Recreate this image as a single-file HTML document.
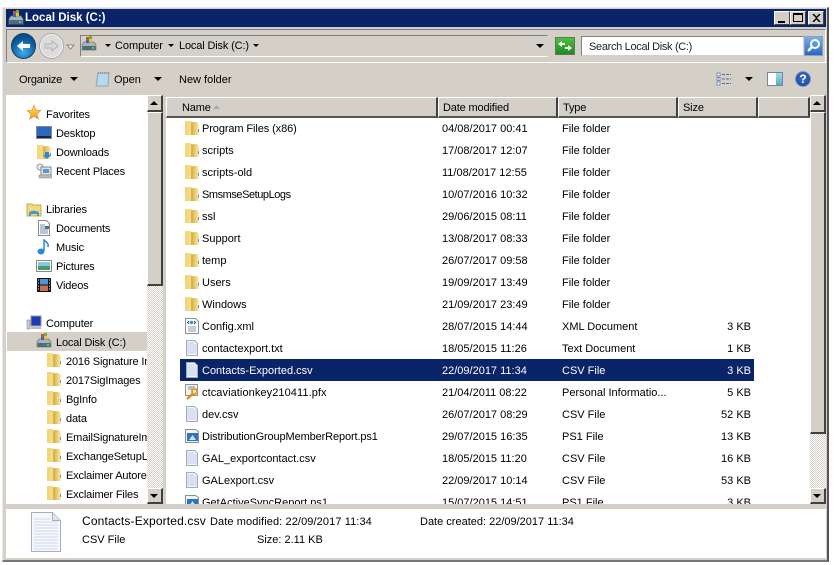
<!DOCTYPE html>
<html><head><meta charset="utf-8">
<style>
html,body{margin:0;padding:0;width:836px;height:565px;overflow:hidden;background:#fff}
*{box-sizing:border-box}
body{font:11px/14px "Liberation Sans",sans-serif;color:#000;position:relative}
.a{position:absolute}
.t{position:absolute;white-space:nowrap;line-height:14px;height:14px;margin-top:1px}
.i{position:absolute;width:16px;height:16px}
.tri{position:absolute;width:0;height:0;border-left:4px solid transparent;border-right:4px solid transparent;border-top:4px solid #000}
.sb{position:absolute;background:#d4d0c8;border-top:1px solid #fff;border-left:1px solid #fff;border-right:2px solid #404040;border-bottom:2px solid #404040}
.hd{position:absolute;top:97px;height:21px;background:#d4d0c8;border-top:1px solid #fff;border-left:1px solid #fff;border-right:2px solid #404040;border-bottom:2px solid #555;padding:3px 0 0 4px;letter-spacing:-.15px}
.track{position:absolute;background-color:#eeecea;background-image:repeating-conic-gradient(#d4d0c8 0 25%,#fff 0 50%);background-size:2px 2px}
.tree .t{letter-spacing:-.15px}
</style></head><body>
<svg width="0" height="0" style="position:absolute">
<defs>
<linearGradient id="fg" x1="0" y1="0" x2="1" y2="0"><stop offset="0" stop-color="#e9c765"/><stop offset=".45" stop-color="#f8e497"/><stop offset=".6" stop-color="#e0bd5c"/><stop offset="1" stop-color="#fbeeae"/></linearGradient>
<symbol id="fo" viewBox="0 0 16 16"><path d="M1 1h5l2 1h5l2 2v11H1z" fill="url(#fg)"/><path d="M7 2l2 1v12H7z" fill="#d8b450"/><path d="M1 1h6v14H1z" fill="#f4da82" opacity=".7"/><path d="M14 9h1v3h-1z" fill="#4a9ad8"/></symbol>
<symbol id="doc" viewBox="0 0 16 16"><path d="M2.500 .5h8l3 3v12h-11z" fill="#f4f7fc" stroke="#a4acbc"/><path d="M3 3h7M3 5h10M3 7h10M3 9h10M3 11h10M3 13h10" stroke="#bccae6"/></symbol>
<symbol id="xml" viewBox="0 0 16 16"><path d="M1.500 .5h10l3 3v12h-13z" fill="#fff" stroke="#8a8f99"/><path d="M5 3L3.500 4.500 5 6M10 3l1.500 1.500L10 6" stroke="#444" fill="none"/><circle cx="7.500" cy="4.500" r="1.700" fill="#2f9ac8"/><path d="M4 9h8M4 11h8M4 13h8" stroke="#999"/></symbol>
<symbol id="ps" viewBox="0 0 16 16"><path d="M1.500 1.500h10l3 2v11h-13z" fill="#f4f4f4" stroke="#8a8f99"/><rect x="3" y="5" width="11" height="8" fill="#2f74c0"/><path d="M5 12l3.500-5 3.500 5z" fill="#cfe4fa"/></symbol>
<symbol id="pfx" viewBox="0 0 16 16"><path d="M1.500 .5h12v11h-12z" fill="#f8f4ee" stroke="#9a8f80"/><path d="M4 3h7M4 5h6" stroke="#6a8ac0"/><circle cx="10.500" cy="7.500" r="2.500" fill="none" stroke="#e09a20" stroke-width="2"/><path d="M8.500 10L3 15" stroke="#d88a18" stroke-width="2.200"/></symbol>
<symbol id="drv" viewBox="0 0 16 16"><path d="M1 9l2-3h10l2 3v5H1z" fill="#aab4b8" stroke="#707a80" stroke-width=".7"/><rect x="1.500" y="10" width="13" height="4" fill="#4d6d78"/><rect x="11" y="11" width="2" height="2" fill="#60d040"/><rect x="5" y="1" width="3" height="3" fill="#e84820"/><rect x="8" y="0" width="3" height="3" fill="#70b030"/><rect x="5" y="4" width="3" height="3" fill="#2070d0"/><rect x="8" y="3" width="3" height="3" fill="#f0c020"/></symbol>
</defs></svg>

<!-- window frame -->
<div class="a" style="left:2px;top:7px;width:827px;height:555px;background:#d4d0c8;border-right:2px solid #555;border-bottom:2px solid #777;border-left:1px solid #e8e8e8;border-top:1px solid #e8e8e8"></div>

<!-- title bar -->
<div class="a" style="left:6px;top:9px;width:820px;height:18px;background:#0a246a"></div>
<svg class="i" style="left:8px;top:10px"><use href="#drv"/></svg>
<div class="t" style="left:25px;top:11px;margin-top:0;color:#fff;font-weight:bold;font-size:11.500px">Local Disk (C:)</div>
<div class="a" style="left:774px;top:11px;width:16px;height:14px;background:#d4d0c8;border:1px solid;border-color:#fff #404040 #404040 #fff"><div class="a" style="left:3px;bottom:1px;width:7px;height:2px;background:#000"></div></div>
<div class="a" style="left:790px;top:11px;width:16px;height:14px;background:#d4d0c8;border:1px solid;border-color:#fff #404040 #404040 #fff"><div class="a" style="left:2px;top:1px;width:10px;height:9px;border:1px solid #000;border-top-width:2px"></div></div>
<div class="a" style="left:808px;top:11px;width:16px;height:14px;background:#d4d0c8;border:1px solid;border-color:#fff #404040 #404040 #fff"><svg class="a" style="left:3px;top:2px" width="9" height="8"><path d="M1 0l3.500 3.500L8 0M1 8l3.500-3.500L8 8" stroke="#000" stroke-width="1.500" fill="none"/></svg></div>

<!-- address band -->
<div class="a" style="left:6px;top:29px;width:820px;height:34px;border:1px solid;border-color:#808080 #fff #fff #808080;outline:1px solid #d4d0c8"></div>
<div class="a" style="left:11px;top:33px;width:25px;height:26px;border-radius:50%;background:radial-gradient(circle at 50% 75%,#3ab0e8,#0c5a9c 60%,#083c70);border:1px solid #1a3d60"></div>
<svg class="a" style="left:15px;top:38px" width="18" height="16"><path d="M2 8l6-5v3h7v4H8v3z" fill="#fff"/></svg>
<div class="a" style="left:39px;top:33px;width:25px;height:26px;border-radius:50%;background:#dcdcdc;border:1px solid #aaa;box-shadow:inset 0 0 0 1px #f4f4f4"></div>
<svg class="a" style="left:43px;top:38px" width="18" height="16"><path d="M15 8l-6-5v3H2v4h7v3z" fill="#d8d8d8" stroke="#b4b4b4"/></svg>
<svg class="a" style="left:66px;top:44px" width="10" height="7"><path d="M1 1h7L4.500 5z" fill="#fff" stroke="#888"/></svg>
<div class="a" style="left:80px;top:35px;width:468px;height:22px;background:#d4d0c8;border:1px solid;border-color:#808080 #d4d0c8 #fff #808080"></div>
<svg class="a" style="left:81px;top:36px;width:16px;height:16px"><use href="#drv"/></svg>
<div class="tri" style="left:105px;top:44px;border-left-width:3px;border-right-width:3px;border-top-width:3px"></div>
<div class="t" style="left:115px;top:38px;letter-spacing:-.05px">Computer</div>
<div class="tri" style="left:168px;top:44px;border-left-width:3px;border-right-width:3px;border-top-width:3px"></div>
<div class="t" style="left:179px;top:38px;letter-spacing:-.15px">Local Disk (C:)</div>
<div class="tri" style="left:253px;top:44px;border-left-width:3px;border-right-width:3px;border-top-width:3px"></div>
<div class="tri" style="left:536px;top:44px"></div>
<div class="a" style="left:555px;top:37px;width:20px;height:18px;background:linear-gradient(#50c040,#1c8a20);border:1px solid #5a7a50"></div>
<svg class="a" style="left:556px;top:38px" width="18" height="16"><path d="M2 6l4-3v2h3v2H6v2zM16 10l-4 3v-2H9V9h3V7z" fill="#fff"/></svg>
<div class="a" style="left:581px;top:36px;width:223px;height:20px;background:#fff;border:1px solid;border-color:#808080 #d4d0c8 #d4d0c8 #808080"></div>
<div class="t" style="left:589px;top:39px;color:#222;letter-spacing:-.32px">Search Local Disk (C:)</div>
<div class="a" style="left:804px;top:36px;width:19px;height:20px;background:linear-gradient(#7ab0e8,#2a68c0);border:1px solid #8aa0c0"></div>
<svg class="a" style="left:805px;top:37px" width="17" height="17"><circle cx="10" cy="7" r="4" fill="none" stroke="#fff" stroke-width="2"/><path d="M7 10l-4 4" stroke="#fff" stroke-width="2.500"/></svg>

<!-- toolbar -->
<div class="t" style="left:19px;top:72px;letter-spacing:-.2px">Organize</div>
<div class="tri" style="left:70px;top:77px"></div>
<svg class="a" style="left:95px;top:71px" width="16" height="16"><path d="M3 2h11l-1 13H1z" fill="#b8d8f0" stroke="#8aa"/><path d="M3 2h11" stroke="#666" stroke-dasharray="1 1"/></svg>
<div class="t" style="left:114px;top:72px">Open</div>
<div class="tri" style="left:154px;top:77px"></div>
<div class="t" style="left:179px;top:72px">New folder</div>
<svg class="a" style="left:716px;top:72px" width="16" height="14"><path d="M1 1h3v3H1zM1 5.500h3v3H1zM1 10h3v3H1z" fill="#fff" stroke="#5a78a8" stroke-width=".8"/><path d="M6 2.500h9M6 7h9M6 11.500h9" stroke="#5a6a90" stroke-dasharray="3 1"/><rect x="2" y="6.500" width="1" height="1" fill="#e02020"/></svg>
<div class="tri" style="left:745px;top:77px"></div>
<div class="a" style="left:767px;top:72px;width:16px;height:14px;background:#fff;border:1px solid #6a8aa8"></div>
<div class="a" style="left:776px;top:73px;width:6px;height:12px;background:linear-gradient(#a8d8e8,#5ea8c8)"></div>
<div class="a" style="left:795px;top:71px;width:16px;height:16px;border-radius:50%;background:radial-gradient(circle at 50% 40%,#3a70d0,#1a3f98);border:1px solid #8a98b8;color:#fff;font:bold 12px/14px 'Liberation Sans',sans-serif;text-align:center">?</div>

<!-- left pane -->
<div class="a tree" style="left:6px;top:95px;width:141px;height:409px;background:#fff;overflow:hidden">
 <svg class="a" style="left:20px;top:9px;width:16px;height:16px"><defs><linearGradient id="st" x1="0" y1="0" x2="0" y2="1"><stop offset="0" stop-color="#fbe070"/><stop offset="1" stop-color="#f49a20"/></linearGradient></defs><path d="M8 1l2 5 5 .5-4 3.500 1.500 5L8 12.500 3.500 15 5 10 1 6.500 6 6z" fill="url(#st)" stroke="#e09020" stroke-width=".6"/></svg>
 <div class="t" style="left:40px;top:12px">Favorites</div>
 <svg class="a" style="left:30px;top:30px;width:16px;height:16px"><rect x=".5" y="1.500" width="15" height="12" fill="#2a68c0" stroke="#7a8aa0"/><rect x="1" y="11" width="14" height="2" fill="#223"/></svg>
 <div class="t" style="left:50px;top:31px">Desktop</div>
 <svg class="i" style="left:30px;top:49px"><use href="#fo"/><path d="M9 8h4v3h2l-4 4-4-4h2z" fill="#2a88d8"/></svg>
 <div class="t" style="left:50px;top:50px">Downloads</div>
 <svg class="a" style="left:30px;top:68px;width:16px;height:16px"><circle cx="4" cy="4" r="3" fill="#eee" stroke="#999"/><rect x="5" y="4" width="10" height="8" fill="#d8e4f0" stroke="#888"/><rect x="7" y="6" width="6" height="4" fill="#5a98d0"/><rect x="3" y="12" width="13" height="3" fill="#bbb" stroke="#888" stroke-width=".5"/></svg>
 <div class="t" style="left:50px;top:69px">Recent Places</div>
 <svg class="a" style="left:20px;top:106px;width:16px;height:16px"><path d="M1 3h5l1 1h8v11H1z" fill="#f2d880" stroke="#c8a848"/><path d="M3 15v-3c0-3 10-3 10 0v3h-2v-2H5v2z" fill="#4a98d0"/></svg>
 <div class="t" style="left:40px;top:107px">Libraries</div>
 <svg class="a" style="left:30px;top:125px;width:16px;height:16px"><path d="M2.500 .5h8l3 3v12h-11z" fill="#fff" stroke="#888"/><path d="M4 5h5M4 7h5M4 9h8M4 11h8M4 13h8" stroke="#7a88a8"/><rect x="9" y="6" width="4" height="3" fill="#3a70b0"/></svg>
 <div class="t" style="left:50px;top:126px">Documents</div>
 <svg class="a" style="left:30px;top:144px;width:16px;height:16px"><ellipse cx="5" cy="12.500" rx="3.500" ry="3" fill="#2a88d8"/><path d="M8 12V1c2 2 5 3 4 7" fill="none" stroke="#2a88d8" stroke-width="1.500"/></svg>
 <div class="t" style="left:50px;top:145px">Music</div>
 <svg class="a" style="left:30px;top:163px;width:16px;height:16px"><rect x=".5" y="2.500" width="15" height="11" fill="#fff" stroke="#888"/><rect x="2" y="4" width="12" height="4" fill="#8ac8e0"/><rect x="2" y="8" width="12" height="4" fill="#4a9a6a"/></svg>
 <div class="t" style="left:50px;top:164px">Pictures</div>
 <svg class="a" style="left:30px;top:182px;width:16px;height:16px"><rect x="1" y="1" width="14" height="14" fill="#111"/><rect x="4" y="2" width="8" height="5.500" fill="#4a98d8"/><rect x="4" y="8.500" width="8" height="5.500" fill="#c87050"/><path d="M2 3h1M2 6h1M2 9h1M2 12h1M13 3h1M13 6h1M13 9h1M13 12h1" stroke="#fff"/></svg>
 <div class="t" style="left:50px;top:183px">Videos</div>
 <svg class="a" style="left:20px;top:220px;width:16px;height:16px"><rect x="5" y="1" width="10" height="10" fill="#1a3ab8" stroke="#999"/><rect x="1" y="5" width="3" height="9" fill="#ccc" stroke="#777" stroke-width=".5"/><rect x="5" y="12" width="10" height="2" fill="#bbb"/></svg>
 <div class="t" style="left:40px;top:221px">Computer</div>
 <div class="a" style="left:1px;top:237px;width:140px;height:19px;background:#d4d0c8"></div>
 <svg class="i" style="left:30px;top:238px"><use href="#drv"/></svg>
 <div class="t" style="left:50px;top:240px">Local Disk (C:)</div>
 <svg class="i" style="left:40px;top:257px"><use href="#fo"/></svg><div class="t" style="left:60px;top:259px">2016 Signature Images</div>
 <svg class="i" style="left:40px;top:276px"><use href="#fo"/></svg><div class="t" style="left:60px;top:278px">2017SigImages</div>
 <svg class="i" style="left:40px;top:295px"><use href="#fo"/></svg><div class="t" style="left:60px;top:297px">BgInfo</div>
 <svg class="i" style="left:40px;top:314px"><use href="#fo"/></svg><div class="t" style="left:60px;top:316px">data</div>
 <svg class="i" style="left:40px;top:333px"><use href="#fo"/></svg><div class="t" style="left:60px;top:335px">EmailSignatureImages</div>
 <svg class="i" style="left:40px;top:352px"><use href="#fo"/></svg><div class="t" style="left:60px;top:354px">ExchangeSetupLogs</div>
 <svg class="i" style="left:40px;top:371px"><use href="#fo"/></svg><div class="t" style="left:60px;top:373px">Exclaimer Autoresponder</div>
 <svg class="i" style="left:40px;top:390px"><use href="#fo"/></svg><div class="t" style="left:60px;top:392px">Exclaimer Files</div>
</div>

<!-- left scrollbar -->
<div class="track" style="left:147px;top:95px;width:16px;height:409px"></div>
<div class="sb" style="left:147px;top:95px;width:16px;height:17px"><div class="tri" style="left:2px;top:5px;border-top:0;border-bottom:4px solid #000"></div></div>
<div class="sb" style="left:147px;top:112px;width:16px;height:174px"></div>
<div class="sb" style="left:147px;top:488px;width:16px;height:16px"><div class="tri" style="left:2px;top:5px"></div></div>

<!-- file list -->
<div class="a" style="left:166px;top:97px;width:644px;height:407px;background:#fff"></div>

<div class="hd" style="left:166px;width:272px;padding-left:15px">Name</div>
<svg class="a" style="left:213px;top:105px" width="7" height="4"><path d="M0 4L3.500 0 7 4z" fill="#aaa"/></svg>
<div class="hd" style="left:438px;width:120px">Date modified</div>
<div class="hd" style="left:558px;width:120px">Type</div>
<div class="hd" style="left:678px;width:80px">Size</div>
<div class="hd" style="left:758px;width:52px"></div>

<div class="a" style="left:166px;top:118px;width:644px;height:386px;overflow:hidden">
 <div class="a" style="left:14px;top:241px;width:574px;height:22px;background:#0a246a"></div>

 <svg class="i" style="left:18px;top:2px"><use href="#fo"/></svg><div class="t" style="left:36px;top:3px;letter-spacing:-.1px">Program Files (x86)</div><div class="t" style="left:276px;top:3px">04/08/2017 00:41</div><div class="t" style="left:396px;top:3px">File folder</div>
 <svg class="i" style="left:18px;top:24px"><use href="#fo"/></svg><div class="t" style="left:36px;top:25px">scripts</div><div class="t" style="left:276px;top:25px">17/08/2017 12:07</div><div class="t" style="left:396px;top:25px">File folder</div>
 <svg class="i" style="left:18px;top:46px"><use href="#fo"/></svg><div class="t" style="left:36px;top:47px">scripts-old</div><div class="t" style="left:276px;top:47px">11/08/2017 12:55</div><div class="t" style="left:396px;top:47px">File folder</div>
 <svg class="i" style="left:18px;top:68px"><use href="#fo"/></svg><div class="t" style="left:36px;top:69px;letter-spacing:-.45px">SmsmseSetupLogs</div><div class="t" style="left:276px;top:69px">10/07/2016 10:32</div><div class="t" style="left:396px;top:69px">File folder</div>
 <svg class="i" style="left:18px;top:90px"><use href="#fo"/></svg><div class="t" style="left:36px;top:91px">ssl</div><div class="t" style="left:276px;top:91px">29/06/2015 08:11</div><div class="t" style="left:396px;top:91px">File folder</div>
 <svg class="i" style="left:18px;top:112px"><use href="#fo"/></svg><div class="t" style="left:36px;top:113px">Support</div><div class="t" style="left:276px;top:113px">13/08/2017 08:33</div><div class="t" style="left:396px;top:113px">File folder</div>
 <svg class="i" style="left:18px;top:134px"><use href="#fo"/></svg><div class="t" style="left:36px;top:135px">temp</div><div class="t" style="left:276px;top:135px">26/07/2017 09:58</div><div class="t" style="left:396px;top:135px">File folder</div>
 <svg class="i" style="left:18px;top:156px"><use href="#fo"/></svg><div class="t" style="left:36px;top:157px">Users</div><div class="t" style="left:276px;top:157px">19/09/2017 13:49</div><div class="t" style="left:396px;top:157px">File folder</div>
 <svg class="i" style="left:18px;top:178px"><use href="#fo"/></svg><div class="t" style="left:36px;top:179px">Windows</div><div class="t" style="left:276px;top:179px">21/09/2017 23:49</div><div class="t" style="left:396px;top:179px">File folder</div>

 <svg class="i" style="left:18px;top:200px"><use href="#xml"/></svg><div class="t" style="left:36px;top:201px">Config.xml</div><div class="t" style="left:276px;top:201px">28/07/2015 14:44</div><div class="t" style="left:396px;top:201px">XML Document</div><div class="t" style="right:59px;top:201px">3 KB</div>
 <svg class="i" style="left:18px;top:222px"><use href="#doc"/></svg><div class="t" style="left:36px;top:223px">contactexport.txt</div><div class="t" style="left:276px;top:223px">18/05/2015 11:26</div><div class="t" style="left:396px;top:223px">Text Document</div><div class="t" style="right:59px;top:223px">1 KB</div>
 <svg class="i" style="left:18px;top:244px"><use href="#doc"/></svg><div class="t" style="left:36px;top:245px;color:#fff">Contacts-Exported.csv</div><div class="t" style="left:276px;top:245px;color:#fff">22/09/2017 11:34</div><div class="t" style="left:396px;top:245px;color:#fff">CSV File</div><div class="t" style="right:59px;top:245px;color:#fff">3 KB</div>
 <svg class="i" style="left:18px;top:266px"><use href="#pfx"/></svg><div class="t" style="left:36px;top:267px;letter-spacing:.08px">ctcaviationkey210411.pfx</div><div class="t" style="left:276px;top:267px">21/04/2011 08:22</div><div class="t" style="left:396px;top:267px">Personal Informatio...</div><div class="t" style="right:59px;top:267px">5 KB</div>
 <svg class="i" style="left:18px;top:288px"><use href="#doc"/></svg><div class="t" style="left:36px;top:289px">dev.csv</div><div class="t" style="left:276px;top:289px">26/07/2017 08:29</div><div class="t" style="left:396px;top:289px">CSV File</div><div class="t" style="right:59px;top:289px">52 KB</div>
 <svg class="i" style="left:18px;top:310px"><use href="#ps"/></svg><div class="t" style="left:36px;top:311px;letter-spacing:-.12px">DistributionGroupMemberReport.ps1</div><div class="t" style="left:276px;top:311px">29/07/2015 16:35</div><div class="t" style="left:396px;top:311px">PS1 File</div><div class="t" style="right:59px;top:311px">13 KB</div>
 <svg class="i" style="left:18px;top:332px"><use href="#doc"/></svg><div class="t" style="left:36px;top:333px">GAL_exportcontact.csv</div><div class="t" style="left:276px;top:333px">18/05/2015 11:20</div><div class="t" style="left:396px;top:333px">CSV File</div><div class="t" style="right:59px;top:333px">16 KB</div>
 <svg class="i" style="left:18px;top:354px"><use href="#doc"/></svg><div class="t" style="left:36px;top:355px">GALexport.csv</div><div class="t" style="left:276px;top:355px">22/09/2017 10:14</div><div class="t" style="left:396px;top:355px">CSV File</div><div class="t" style="right:59px;top:355px">53 KB</div>
 <svg class="i" style="left:18px;top:376px"><use href="#ps"/></svg><div class="t" style="left:36px;top:377px">GetActiveSyncReport.ps1</div><div class="t" style="left:276px;top:377px">15/07/2015 14:51</div><div class="t" style="left:396px;top:377px">PS1 File</div><div class="t" style="right:59px;top:377px">3 KB</div>
</div>

<!-- right scrollbar -->
<div class="track" style="left:810px;top:95px;width:16px;height:409px"></div>
<div class="sb" style="left:810px;top:95px;width:16px;height:17px"><div class="tri" style="left:2px;top:5px;border-top:0;border-bottom:4px solid #000"></div></div>
<div class="sb" style="left:810px;top:112px;width:16px;height:322px"></div>
<div class="sb" style="left:810px;top:488px;width:16px;height:16px"><div class="tri" style="left:2px;top:5px"></div></div>

<!-- details pane -->
<div class="a" style="left:6px;top:509px;width:820px;height:49px;background:#fff"></div>
<svg class="a" style="left:30px;top:511px" width="32" height="44"><path d="M1.500 1.500h21l8 8v31h-29z" fill="#f6f8fd" stroke="#a8aeb8"/><path d="M22.500 1.500v8h8" fill="#e0e4ea" stroke="#a8aeb8"/><path d="M4 8h17M4 11h24M4 14h24M4 17h24M4 20h24M4 23h24M4 26h24M4 29h24M4 32h24M4 35h24M4 38h24" stroke="#cfd9ee"/></svg>
<div class="t" style="left:82px;top:513px;font-size:12px;letter-spacing:.15px">Contacts-Exported.csv</div>
<div class="t" style="left:210px;top:514px;letter-spacing:.1px">Date modified: 22/09/2017 11:34</div>
<div class="t" style="left:420px;top:514px">Date created: 22/09/2017 11:34</div>
<div class="t" style="left:82px;top:532px">CSV File</div>
<div class="t" style="left:257px;top:532px">Size: 2.11 KB</div>
</body></html>
